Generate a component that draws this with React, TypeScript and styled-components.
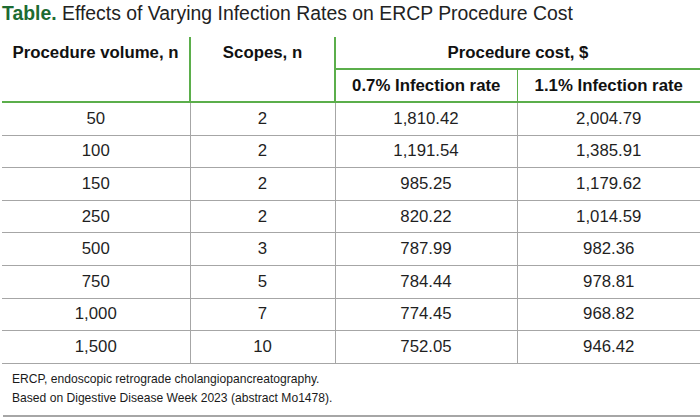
import React from "react";
import styled, { createGlobalStyle } from "styled-components";

const GlobalStyle = createGlobalStyle`
  html, body {
    margin: 0;
    padding: 0;
    background: #fff;
  }
`;

const green = "#5bae4b";
const gray = "#a6a6a6";

const Wrapper = styled.div`
  width: 700px;
  height: 420px;
  overflow: hidden;
  font-family: "Liberation Sans", Arial, sans-serif;
  color: #1a1a1a;
`;

const Title = styled.h1`
  margin: 0;
  padding: 2px 0 0 2px;
  height: 37px;
  box-sizing: border-box;
  font-size: 19.4px;
  line-height: 22px;
  font-weight: 400;
  color: #222;
  white-space: nowrap;
`;

const Label = styled.span`
  font-weight: 700;
  color: #1d6b32;
`;

const Table = styled.table`
  margin-left: 2px;
  width: 698px;
  border-collapse: collapse;
  table-layout: fixed;
  font-size: 16.8px;
`;

const HeadCell = styled.th<{ $left?: "green" | "thin" | "none"; $top?: boolean }>`
  font-weight: 700;
  color: #111;
  text-align: center;
  vertical-align: ${(p) => (p.$top ? "top" : "middle")};
  padding: ${(p) => (p.$top ? "6px 0 0" : "0")};
  height: 31px;
  white-space: nowrap;
  border-left: ${(p) =>
    p.$left === "green" ? `2px solid ${green}` : p.$left === "thin" ? `1px solid ${green}` : "none"};
  border-bottom: 2px solid ${green};
`;

const Cell = styled.td<{ $first?: boolean }>`
  text-align: center;
  height: 31.6px;
  padding: 0;
  color: #1f1f1f;
  border-left: ${(p) => (p.$first ? "none" : `1px solid ${gray}`)};
  border-bottom: 1px solid ${gray};
`;

const Notes = styled.div`
  margin-left: 3px;
  width: 697px;
  padding: 6px 0 7px 9px;
  box-sizing: border-box;
  font-size: 12.1px;
  line-height: 19px;
  color: #1a1a1a;
  border-bottom: 2px solid ${gray};
`;

const rows = [
  ["50", "2", "1,810.42", "2,004.79"],
  ["100", "2", "1,191.54", "1,385.91"],
  ["150", "2", "985.25", "1,179.62"],
  ["250", "2", "820.22", "1,014.59"],
  ["500", "3", "787.99", "982.36"],
  ["750", "5", "784.44", "978.81"],
  ["1,000", "7", "774.45", "968.82"],
  ["1,500", "10", "752.05", "946.42"],
];

export default function App() {
  return (
    <Wrapper>
      <GlobalStyle />
      <Title>
        <Label>Table.</Label> Effects of Varying Infection Rates on ERCP Procedure Cost
      </Title>
      <Table>
        <colgroup>
          <col style={{ width: 188 }} />
          <col style={{ width: 145 }} />
          <col style={{ width: 182 }} />
          <col style={{ width: 183 }} />
        </colgroup>
        <thead>
          <tr>
            <HeadCell rowSpan={2} $top $left="none">
              Procedure volume, n
            </HeadCell>
            <HeadCell rowSpan={2} $top $left="green">
              Scopes, n
            </HeadCell>
            <HeadCell colSpan={2} $left="green">
              Procedure cost, $
            </HeadCell>
          </tr>
          <tr>
            <HeadCell $left="green">0.7% Infection rate</HeadCell>
            <HeadCell $left="thin">1.1% Infection rate</HeadCell>
          </tr>
        </thead>
        <tbody>
          {rows.map((r) => (
            <tr key={r[0]}>
              {r.map((v, i) => (
                <Cell key={i} $first={i === 0}>
                  {v}
                </Cell>
              ))}
            </tr>
          ))}
        </tbody>
      </Table>
      <Notes>
        <div>ERCP, endoscopic retrograde cholangiopancreatography.</div>
        <div>Based on Digestive Disease Week 2023 (abstract Mo1478).</div>
      </Notes>
    </Wrapper>
  );
}
